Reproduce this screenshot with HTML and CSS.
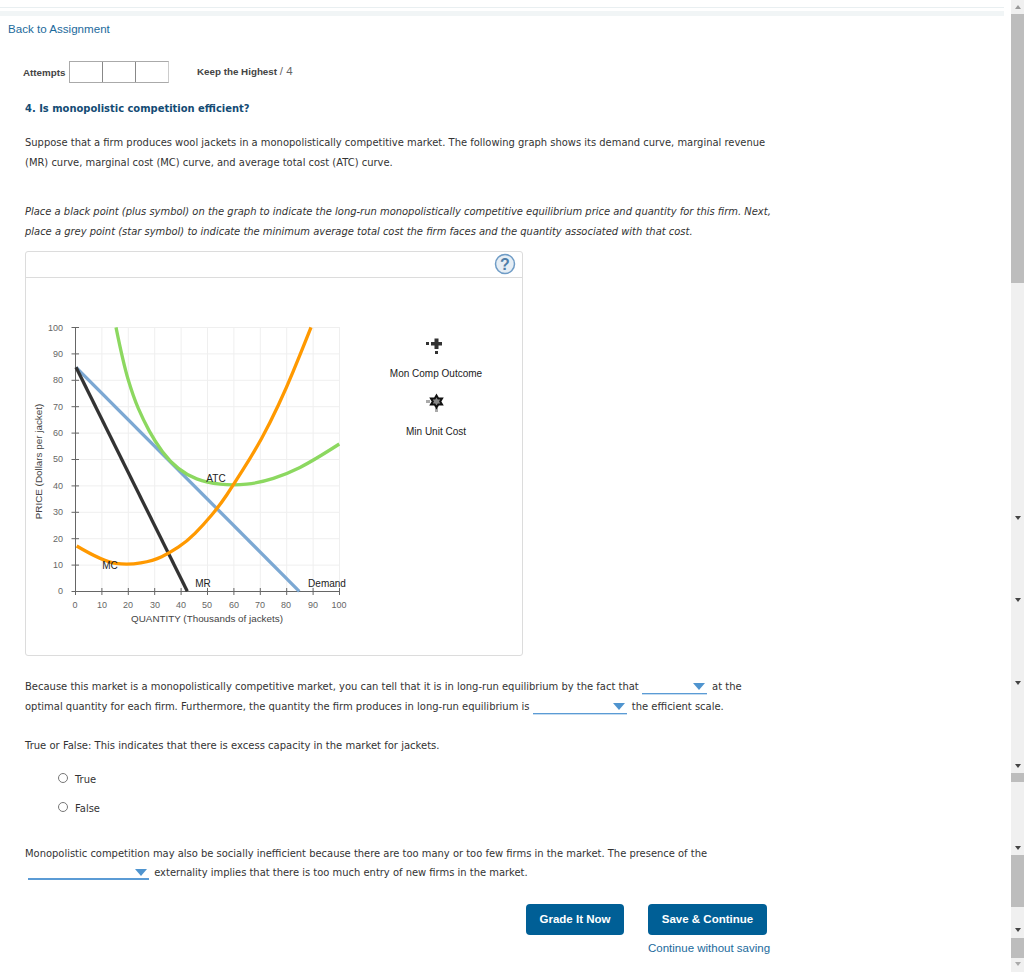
FILE: index.html
```html
<!DOCTYPE html>
<html lang="en">
<head>
    <meta charset="UTF-8">
    <title>Assignment</title>
    <link rel="stylesheet" href="styles.css">
</head>
<body>
    <div class="page">
        <div class="content">
            <div class="top-lines"></div>
            <a class="back-link" href="#">Back to Assignment</a>

            <div class="attempts">
                <span class="attempts-label">Attempts</span>
                <div class="attempt-boxes"><span></span><span></span><span></span></div>
                <span class="keep">Keep the Highest <span class="keep-score">/ 4</span></span>
            </div>

            <div class="question">
                <h2>4. Is monopolistic competition efficient?</h2>
                <p class="intro">Suppose that a firm produces wool jackets in a monopolistically competitive market. The following graph shows its demand curve, marginal revenue (MR) curve, marginal cost (MC) curve, and average total cost (ATC) curve.</p>
                <p class="instructions">Place a black point (plus symbol) on the graph to indicate the long-run monopolistically competitive equilibrium price and quantity for this firm. Next, place a grey point (star symbol) to indicate the minimum average total cost the firm faces and the quantity associated with that cost.</p>

                <div class="graph-panel">
                    <div class="graph-head">
                        <svg class="help-icon" width="22" height="22" viewBox="0 0 22 22">
                            <circle cx="11" cy="11" r="9.5" fill="#e6eef5" stroke="#6f9cc6" stroke-width="1.5"/>
                            <text x="11" y="16.5" text-anchor="middle" class="help-mark">?</text>
                        </svg>
                    </div>
                    <svg class="graph" width="496" height="378" viewBox="26 278 496 378">
                        <g class="grid">
                            <path d="M101.9 327V591M128.3 327V591M154.7 327V591M181.1 327V591M207.5 327V591M233.9 327V591M260.3 327V591M286.7 327V591M313.1 327V591M339.5 327V591"/>
                            <path d="M75.5 327.5H339.5M75.5 353.9H339.5M75.5 380.3H339.5M75.5 406.7H339.5M75.5 433.1H339.5M75.5 459.5H339.5M75.5 485.9H339.5M75.5 512.3H339.5M75.5 538.7H339.5M75.5 565.1H339.5"/>
                        </g>
                        <g class="axes">
                            <path d="M75.5 327.5V591.5H339.5"/>
                            <path d="M71.5 327.5H79M71.5 353.9H79M71.5 380.3H79M71.5 406.7H79M71.5 433.1H79M71.5 459.5H79M71.5 485.9H79M71.5 512.3H79M71.5 538.7H79M71.5 565.1H79M71.5 591.5H79"/>
                            <path d="M75.5 588V595M101.9 588V595M128.3 588V595M154.7 588V595M181.1 588V595M207.5 588V595M233.9 588V595M260.3 588V595M286.7 588V595M313.1 588V595M339.5 588V595"/>
                        </g>
                        <g class="ticks y-ticks">
                            <text x="63" y="331">100</text><text x="63" y="357">90</text><text x="63" y="383">80</text><text x="63" y="410">70</text><text x="63" y="436">60</text><text x="63" y="462">50</text><text x="63" y="489">40</text><text x="63" y="515">30</text><text x="63" y="542">20</text><text x="63" y="568">10</text><text x="63" y="594">0</text>
                        </g>
                        <g class="ticks x-ticks">
                            <text x="75" y="608">0</text><text x="102" y="608">10</text><text x="128" y="608">20</text><text x="155" y="608">30</text><text x="181" y="608">40</text><text x="207" y="608">50</text><text x="234" y="608">60</text><text x="260" y="608">70</text><text x="286" y="608">80</text><text x="313" y="608">90</text><text x="339" y="608">100</text>
                        </g>
                        <text class="axis-title" x="207" y="622">QUANTITY (Thousands of jackets)</text>
                        <text class="axis-title" transform="translate(41.500 461.500) rotate(-90)">PRICE (Dollars per jacket)</text>

                        <path class="curve demand" d="M76 367.3L299.3 591.3"/>
                        <path class="curve mr" d="M76 367.3L187.3 591.3"/>
                        <path class="curve atc" d="M116 327.3Q123.3 363.3 128.3 380Q133.3 396.7 138.3 408.4Q143.3 420 149.2 430.9Q155 441.7 162.5 451.7Q170 461.7 178.4 468.4Q186.7 475 196.7 478.9Q206.7 482.7 220 484.2Q233.3 485.7 246.7 484.2Q260 482.7 273.4 478.4Q286.7 474 300 467.4Q313.3 460.7 339.3 444"/>
                        <path class="curve mc" d="M76.7 546Q103.3 561.7 115.8 563.4Q128.3 565 140.8 562.9Q153.3 560.7 161.7 556.7Q170 552.7 178.3 547.2Q186.7 541.7 195 533.4Q203.3 525 211.7 515Q220 505 226.7 495Q233.3 485 243.3 469.2Q253.3 453.3 261.7 438.2Q270 423 278.3 405.2Q286.7 387.5 293.3 371.2Q300 355 305.5 341.2L311 327.3"/>

                        <text class="curve-label" x="216" y="482">ATC</text>
                        <text class="curve-label" x="110" y="569">MC</text>
                        <text class="curve-label" x="203" y="587">MR</text>
                        <text class="curve-label" x="327" y="587">Demand</text>

                        <rect class="mark-dark" x="426" y="342" width="3" height="3"/>
                        <rect class="mark-dark" x="435" y="351" width="3" height="3"/>
                        <path class="mark-dark" d="M434.500 338.500h4v3.500h3.500v3.500h-3.500v3.500h-4v-3.500h-3.500v-3.500h3.500z"/>
                        <text class="curve-label" x="436" y="377">Mon Comp Outcome</text>

                        <rect class="mark-grey" x="426" y="400" width="4" height="3"/>
                        <rect class="mark-grey" x="435" y="408" width="3" height="4"/>
                        <path class="mark-star" d="M436.500 395.500l1.800 3h3.700l-1.800 3 1.800 3h-3.700l-1.800 3-1.800-3h-3.700l1.800-3-1.800-3h3.700z"/>
                        <text class="curve-label" x="436" y="435">Min Unit Cost</text>
                    </svg>
                </div>

                <p class="answer-text">Because this market is a monopolistically competitive market, you can tell that it is in long-run equilibrium by the fact that <span class="drop drop-a"></span> at the optimal quantity for each firm. Furthermore, the quantity the firm produces in long-run equilibrium is <span class="drop drop-b"></span> the efficient scale.</p>

                <p class="true-false">True or False: This indicates that there is excess capacity in the market for jackets.</p>
                <label class="radio-row"><span class="radio"></span>True</label>
                <label class="radio-row"><span class="radio"></span>False</label>

                <p class="closing">Monopolistic competition may also be socially inefficient because there are too many or too few firms in the market. The presence of the <span class="drop drop-c"></span> externality implies that there is too much entry of new firms in the market.</p>
            </div>

            <div class="actions">
                <button class="btn btn-grade">Grade It Now</button>
                <div class="save-col">
                    <button class="btn btn-save">Save &amp; Continue</button>
                    <a class="skip-link" href="#">Continue without saving</a>
                </div>
            </div>
        </div>

        <div class="rail">
            <i class="arrow arrow-top"></i>
            <div class="thumb thumb-main"></div>
            <i class="arrow a1"></i>
            <i class="arrow a2"></i>
            <i class="arrow a3"></i>
            <i class="arrow a4"></i>
            <div class="thumb thumb-small"></div>
            <i class="arrow a5"></i>
            <div class="thumb thumb-mid"></div>
            <i class="arrow a6"></i>
            <div class="thumb thumb-low"></div>
            <i class="arrow arrow-top-end"></i>
        </div>
    </div>
</body>
</html>
```

FILE: styles.css
```css
* {
    box-sizing: border-box;
}

body {
    margin: 0;
    background-color: #fff;
    color: #333;
    font-family: "DejaVu Sans", Verdana, sans-serif;
    font-size: 9.950px;
}

a {
    color: #1b6a9c;
    text-decoration: none;
}

.page {
    display: flex;
    height: 972px;
    overflow: hidden;
}

.content {
    flex: 1;
    padding-top: 7px;
}

.top-lines {
    width: 1004px;
    height: 9px;
    border-top: 1px solid #e9eff1;
    border-bottom: 5px solid #f1f5f6;
}

.back-link {
    display: block;
    margin: 5px 0 0 8px;
    font-family: "Liberation Sans", Arial, sans-serif;
    font-size: 11.600px;
    line-height: 16px;
}

.attempts {
    display: flex;
    align-items: center;
    margin: 24px 0 0 23px;
    font-family: "Liberation Sans", Arial, sans-serif;
    font-size: 9.800px;
    font-weight: bold;
    color: #444;
}

.attempts-label {
    width: 46px;
}

.attempt-boxes {
    display: flex;
    width: 100px;
    height: 22px;
    border: 1px solid #aaa;
    border-right-color: #ccc;
}

.attempt-boxes span {
    flex: 1;
    border-right: 1px solid #888;
}

.attempt-boxes span:last-child {
    border-right: none;
}

.keep {
    margin: 0 0 2px 28px;
}

.keep-score {
    font-weight: normal;
    font-size: 11.500px;
    color: #666;
}

.question {
    margin-left: 25px;
    width: 752px;
}

.question h2 {
    margin: 18px 0 0;
    font-size: 9.950px;
    line-height: 16px;
    color: #134b74;
}

.question p {
    margin: 0;
    line-height: 19.500px;
}

.intro {
    padding-top: 16px;
}

.instructions {
    padding-top: 30px;
    font-style: italic;
}

.graph-panel {
    width: 498px;
    height: 405px;
    margin-top: 10px;
    border: 1px solid #dcdcdc;
    border-radius: 3px;
}

.graph-head {
    display: flex;
    justify-content: flex-end;
    align-items: center;
    height: 26px;
    padding: 0 6px 2px 0;
    border-bottom: 1px solid #dcdcdc;
}

.help-icon {
    display: block;
}

.help-mark {
    font-family: "Liberation Sans", Arial, sans-serif;
    font-size: 16px;
    font-weight: bold;
    fill: #4f7ea8;
}

.graph {
    display: block;
}

.grid path {
    fill: none;
    stroke: #efefef;
    stroke-width: 1;
}

.axes path {
    fill: none;
    stroke: #666;
    stroke-width: 1;
}

.ticks text {
    font-family: "Liberation Sans", Arial, sans-serif;
    font-size: 9px;
    fill: #666;
}

.y-ticks text {
    text-anchor: end;
}

.x-ticks text {
    text-anchor: middle;
}

.axis-title {
    font-family: "Liberation Sans", Arial, sans-serif;
    font-size: 9.850px;
    fill: #444;
    text-anchor: middle;
}

.curve {
    fill: none;
    stroke-width: 3.300;
}

.demand { stroke: #7ca8d3; }
.mr { stroke: #333; }
.atc { stroke: #8cd860; }
.mc { stroke: #f90; }

.curve-label {
    font-family: "Liberation Sans", Arial, sans-serif;
    font-size: 10px;
    fill: #222;
    text-anchor: middle;
}

.mark-dark { fill: #333; }
.mark-grey { fill: #aaa; }

.mark-star {
    fill: #888;
    stroke: #111;
    stroke-width: 2;
}

.answer-text {
    padding-top: 21px;
    font-size: 9.980px;
}

.drop {
    position: relative;
    display: inline-block;
    height: 13px;
    margin-right: 2px;
    vertical-align: -4px;
    border-bottom: 1px solid #5b9bd5;
    box-shadow: 0 1px 0 #c5dcf0;
}

.drop::after {
    content: "";
    position: absolute;
    right: 2px;
    top: 2px;
    border-left: 6px solid transparent;
    border-right: 6px solid transparent;
    border-top: 7px solid #4f94cf;
}

.drop-a { width: 65px; }
.drop-b { width: 94px; }

.drop-c {
    width: 121px;
    margin-left: 3px;
    border-bottom-width: 2px;
    box-shadow: none;
}

.true-false {
    padding-top: 20px;
    font-size: 10.030px;
}

.radio-row {
    display: flex;
    align-items: center;
    height: 29px;
    margin-left: 33px;
}

.radio {
    width: 10px;
    height: 10px;
    margin: -2px 7px 0 0;
    border: 1px solid #777;
    border-radius: 50%;
    background-color: #fff;
}

.true-false + .radio-row {
    margin-top: 9px;
}

.closing {
    padding-top: 21px;
}

.actions {
    display: flex;
    margin: 21px 0 0 526px;
    gap: 24px;
}

.btn {
    height: 31px;
    padding: 0;
    border: none;
    border-radius: 4px;
    background-color: #005f96;
    color: #fff;
    font-family: "Liberation Sans", Arial, sans-serif;
    font-size: 11.500px;
    font-weight: bold;
}

.btn-grade { width: 98px; }
.btn-save { width: 119px; }

.save-col {
    display: flex;
    flex-direction: column;
}

.skip-link {
    margin-top: 5px;
    font-family: "Liberation Sans", Arial, sans-serif;
    font-size: 11.500px;
    line-height: 16px;
    white-space: nowrap;
}

/* stacked scrollbars on the right */
.rail {
    display: flex;
    flex: 0 0 13px;
    flex-direction: column;
    align-items: center;
    height: 972px;
    background-color: #f0f0f0;
}

.arrow {
    display: block;
    width: 0;
    height: 0;
    border-left: 3.500px solid transparent;
    border-right: 3.500px solid transparent;
    border-top: 4px solid #444;
}

.arrow-top {
    margin-top: 5px;
    border-top: none;
    border-bottom: 4px solid #999;
}

.arrow-top-end {
    margin-top: 4px;
    border-top-color: #aaa;
}

.thumb {
    align-self: stretch;
    background-color: #bdbdbd;
}

.thumb-main { height: 269px; margin-top: 5px; }
.thumb-small { height: 9px; margin-top: 5px; }
.thumb-mid { height: 52px; margin-top: 5px; }
.thumb-low { height: 20px; margin-top: 6px; }

.a1 { margin-top: 233px; }
.a2 { margin-top: 78px; }
.a3 { margin-top: 79px; }
.a4 { margin-top: 79px; }
.a5 { margin-top: 64px; }
.a6 { margin-top: 21px; }
```
